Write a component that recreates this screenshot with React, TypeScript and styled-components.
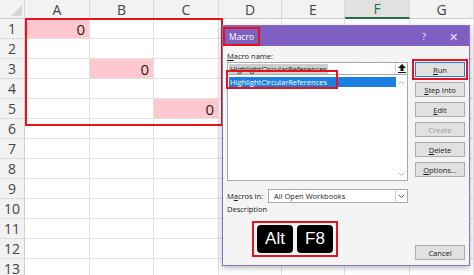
import styled, { createGlobalStyle } from 'styled-components';

const GlobalStyle = createGlobalStyle`
  html, body {
    margin: 0;
    padding: 0;
    background: #ffffff;
  }
  * {
    box-sizing: border-box;
  }
`;

const COLUMNS = ['A', 'B', 'C', 'D', 'E', 'F', 'G'];
const ROW_COUNT = 13;
const PINK_CELLS: Record<string, boolean> = { '1-0': true, '3-1': true, '5-2': true };

const Page = styled.div`
  position: relative;
  width: 474px;
  height: 275px;
  overflow: hidden;
  background: #ffffff;
`;

const Sheet = styled.div`
  display: grid;
  grid-template-columns: 25px 65px 64px 65px 63px 63px 65px 64px;
  grid-template-rows: 19px;
  grid-auto-rows: 20px;
  font-family: 'Open Sans', 'Noto Sans', sans-serif;
`;

const Corner = styled.div`
  display: flex;
  align-items: flex-end;
  justify-content: flex-end;
  padding: 0 2px 2px 0;
  background: #f2f2f2;
  border-right: 1px solid #d9d9d9;
  border-bottom: 1px solid #cfcfcf;
`;

const ColHeader = styled.div<{ selected?: boolean }>`
  display: flex;
  align-items: center;
  justify-content: center;
  font-size: 14px;
  color: ${(p) => (p.selected ? '#217346' : '#444444')};
  background: ${(p) => (p.selected ? '#e1e1e1' : '#f2f2f2')};
  border-right: 1px solid #d9d9d9;
  border-bottom: ${(p) => (p.selected ? '2px solid #217346' : '1px solid #cfcfcf')};
`;

const RowHeader = styled.div`
  display: flex;
  align-items: center;
  justify-content: center;
  font-size: 14px;
  color: #444444;
  background: #f2f2f2;
  border-right: 1px solid #cfcfcf;
  border-bottom: 1px solid #dcdcdc;
`;

const Cell = styled.div<{ pink?: boolean }>`
  display: flex;
  align-items: center;
  justify-content: flex-end;
  padding-right: 4px;
  font-size: 15px;
  color: #1f1f1f;
  background: ${(p) => (p.pink ? '#ffc7ce' : '#ffffff')};
  border-right: 1px solid #e1e1e1;
  border-bottom: 1px solid #e1e1e1;
`;

const RangeMark = styled.div`
  position: absolute;
  left: 25px;
  top: 18px;
  width: 198px;
  height: 108px;
  border: 2px solid #e3141c;
  pointer-events: none;
`;

const ItemMark = styled.div`
  position: absolute;
  left: 226px;
  top: 70px;
  width: 112px;
  height: 19px;
  border: 2px solid #e3141c;
  pointer-events: none;
`;

const Dialog = styled.div`
  position: absolute;
  left: 222px;
  top: 25px;
  width: 248px;
  height: 241px;
  display: flex;
  flex-direction: column;
  background: #f4f4f4;
  border: 1px solid #8a70c4;
  box-shadow: 0 2px 6px rgba(0, 0, 0, 0.28);
  font-family: 'Open Sans', 'Noto Sans', sans-serif;
  font-size: 7.5px;
  color: #1a1a1a;
`;

const TitleBar = styled.div`
  height: 20px;
  display: flex;
  align-items: center;
  background: #7f5fc2;
  color: #ffffff;
`;

const TitleText = styled.span`
  display: flex;
  align-items: center;
  height: 19px;
  padding: 0 4px;
  font-size: 8.5px;
  border: 2px solid #e3141c;
`;

const TitleButton = styled.span<{ wide?: boolean }>`
  width: ${(p) => (p.wide ? '32px' : '26px')};
  text-align: center;
  font-size: ${(p) => (p.wide ? '11px' : '9px')};
  color: #efe9fa;
`;

const Spacer = styled.div`
  flex: 1;
`;

const Body = styled.div`
  flex: 1;
  display: flex;
  gap: 7px;
  padding: 4px 4px 5px 4px;
`;

const LeftCol = styled.div`
  width: 181px;
  display: flex;
  flex-direction: column;
`;

const RightCol = styled.div`
  width: 50px;
  display: flex;
  flex-direction: column;
  gap: 5px;
  padding-top: 12px;
`;

const Label = styled.div`
  height: 12px;
  line-height: 12px;
`;

const NameInput = styled.div`
  height: 12px;
  display: flex;
  align-items: center;
  background: #ffffff;
  border: 1px solid #a9a9a9;
  border-bottom: none;
  padding-left: 1px;
`;

const Selected = styled.span`
  display: inline-block;
  height: 10px;
  line-height: 10px;
  padding: 0 1px;
  background: #cdcdcd;
  color: #1a1a1a;
`;

const LoadButton = styled.span`
  margin-left: auto;
  width: 12px;
  height: 11px;
  display: flex;
  align-items: center;
  justify-content: center;
  border-left: 1px solid #d0d0d0;
`;

const ListBox = styled.div`
  height: 107px;
  display: flex;
  background: #ffffff;
  border: 1px solid #a9a9a9;
`;

const ListItems = styled.div`
  flex: 1;
  padding: 2px 0 0 1px;
`;

const ListRow = styled.div<{ active?: boolean }>`
  height: 10px;
  line-height: 10px;
  padding-left: 1px;
  background: ${(p) => (p.active ? '#1b7fe0' : 'transparent')};
  color: ${(p) => (p.active ? '#ffffff' : '#1a1a1a')};
`;

const ScrollCol = styled.div`
  width: 11px;
  display: flex;
  flex-direction: column;
  justify-content: space-between;
  align-items: center;
  padding: 5px 0 3px;
`;

const SourceRow = styled.div`
  display: flex;
  align-items: center;
  margin-top: 8px;
  height: 14px;
`;

const SourceLabel = styled.span`
  width: 41px;
`;

const Select = styled.div`
  flex: 1;
  height: 14px;
  display: flex;
  align-items: center;
  padding-left: 5px;
  background: #ffffff;
  border: 1px solid #a9a9a9;
`;

const SelectArrow = styled.span`
  margin-left: auto;
  width: 12px;
  height: 12px;
  display: flex;
  align-items: center;
  justify-content: center;
  border-left: 1px solid #d0d0d0;
`;

const KeyFrame = styled.div`
  margin: 6px 0 0 25px;
  width: 86px;
  height: 36px;
  display: flex;
  gap: 4px;
  padding: 2px 3px;
  border: 2px solid #e3141c;
`;

const KeyCap = styled.div`
  flex: 1;
  display: flex;
  align-items: center;
  justify-content: center;
  background: #000000;
  border-radius: 4px;
  color: #ffffff;
  font-family: 'Liberation Sans', Arial, sans-serif;
  font-size: 17px;
`;

const DialogButton = styled.div<{ primary?: boolean; disabled?: boolean }>`
  height: 15px;
  display: flex;
  align-items: center;
  justify-content: center;
  background: #e1e1e1;
  border: 1px solid ${(p) => (p.primary ? '#2f7fd0' : '#adadad')};
  color: ${(p) => (p.disabled ? '#a0a0a0' : '#1a1a1a')};
  outline: ${(p) => (p.primary ? '2px solid #e3141c' : 'none')};
  outline-offset: 1px;
`;

const CancelButton = styled(DialogButton)`
  margin-top: auto;
`;

const U = styled.span`
  text-decoration: underline;
  text-underline-offset: 1px;
`;

const Chevron = ({ up }: { up?: boolean }) => (
  <svg width="7" height="5" viewBox="0 0 7 5">
    <path d={up ? 'M1 4 L3.5 1.5 L6 4' : 'M1 1 L3.5 3.5 L6 1'} fill="none" stroke="#b5b5b5" strokeWidth="1" />
  </svg>
);

export default function App() {
  const rows = Array.from({ length: ROW_COUNT }, (_, i) => i + 1);
  return (
    <Page>
      <GlobalStyle />
      <Sheet>
        <Corner>
          <svg width="11" height="11" viewBox="0 0 11 11">
            <polygon points="11,0 11,11 0,11" fill="#d6d6d6" />
          </svg>
        </Corner>
        {COLUMNS.map((c) => (
          <ColHeader key={c} selected={c === 'F'}>
            {c}
          </ColHeader>
        ))}
        {rows.map((r) => [
          <RowHeader key={`h${r}`}>{r}</RowHeader>,
          ...COLUMNS.map((c, ci) => {
            const pink = PINK_CELLS[`${r}-${ci}`];
            return (
              <Cell key={`${r}${c}`} pink={pink}>
                {pink ? '0' : ''}
              </Cell>
            );
          }),
        ])}
      </Sheet>
      <RangeMark />

      <Dialog>
        <TitleBar>
          <TitleText>Macro</TitleText>
          <Spacer />
          <TitleButton>?</TitleButton>
          <TitleButton wide>✕</TitleButton>
        </TitleBar>
        <Body>
          <LeftCol>
            <Label>
              <U>M</U>acro name:
            </Label>
            <NameInput>
              <Selected>HighlightCircularReferences</Selected>
              <LoadButton>
                <svg width="8" height="9" viewBox="0 0 8 9">
                  <polygon points="4,0 8,4 5.5,4 5.5,7 2.5,7 2.5,4 0,4" fill="#111" />
                  <rect x="0" y="8" width="8" height="1" fill="#111" />
                </svg>
              </LoadButton>
            </NameInput>
            <ListBox>
              <ListItems>
                <ListRow active>HighlightCircularReferences</ListRow>
              </ListItems>
              <ScrollCol>
                <Chevron up />
                <Chevron />
              </ScrollCol>
            </ListBox>
            <SourceRow>
              <SourceLabel>
                M<U>a</U>cros in:
              </SourceLabel>
              <Select>
                All Open Workbooks
                <SelectArrow>
                  <svg width="7" height="5" viewBox="0 0 7 5">
                    <path d="M1 1 L3.5 3.5 L6 1" fill="none" stroke="#555" strokeWidth="1" />
                  </svg>
                </SelectArrow>
              </Select>
            </SourceRow>
            <Label>Description</Label>
            <KeyFrame>
              <KeyCap>Alt</KeyCap>
              <KeyCap>F8</KeyCap>
            </KeyFrame>
          </LeftCol>
          <RightCol>
            <DialogButton primary>
              <U>R</U>un
            </DialogButton>
            <DialogButton>
              <U>S</U>tep Into
            </DialogButton>
            <DialogButton>
              <U>E</U>dit
            </DialogButton>
            <DialogButton disabled>Create</DialogButton>
            <DialogButton>
              <U>D</U>elete
            </DialogButton>
            <DialogButton>
              <U>O</U>ptions...
            </DialogButton>
            <CancelButton>Cancel</CancelButton>
          </RightCol>
        </Body>
      </Dialog>
      <ItemMark />
    </Page>
  );
}
